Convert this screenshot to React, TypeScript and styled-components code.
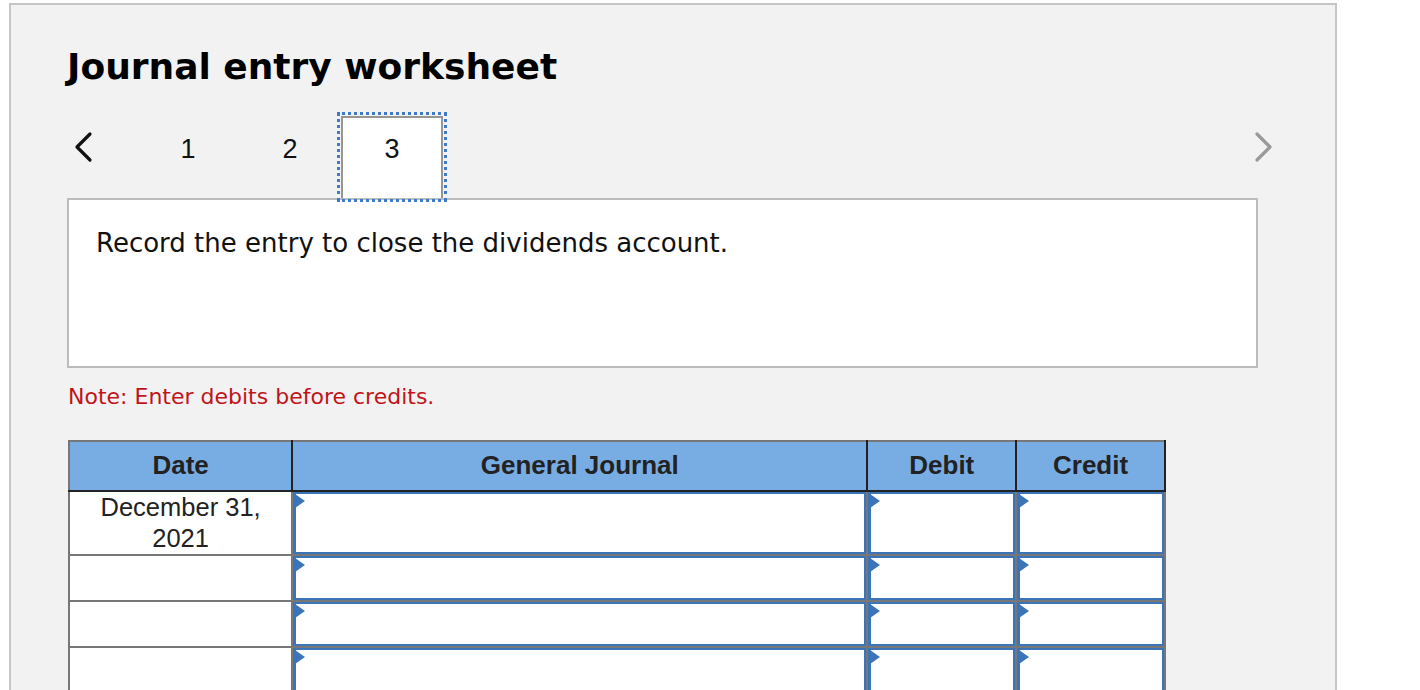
import React from 'react';
import styled, { createGlobalStyle } from 'styled-components';

const GlobalStyle = createGlobalStyle`
  html, body {
    margin: 0;
    padding: 0;
    background: #ffffff;
  }
  body {
    font-family: "Liberation Sans", Arial, sans-serif;
    color: #222;
  }
`;

const Page = styled.div`
  padding: 3px 0 0 9px;
  height: 687px;
  overflow: hidden;
`;

const Panel = styled.section`
  width: 1328px;
  min-height: 700px;
  background: #f2f2f2;
  border: 2px solid #c6c6c6;
  padding: 0 0 0 56px;
  box-sizing: border-box;
`;

const Title = styled.h1`
  margin: 0;
  padding-top: 42px;
  font-family: "DejaVu Sans", Verdana, sans-serif;
  font-weight: bold;
  font-size: 36px;
  line-height: 40px;
  color: #000;
`;

const TabBar = styled.div`
  display: flex;
  align-items: flex-start;
  margin-top: 29px;
  width: 1208px;
  height: 82px;
  position: relative;
  z-index: 1;
`;

const Arrow = styled.button<{ $muted?: boolean }>`
  width: 70px;
  height: 62px;
  padding: 0;
  border: none;
  background: transparent;
  display: flex;
  align-items: center;
  justify-content: ${p => (p.$muted ? 'flex-end' : 'flex-start')};
  padding-left: ${p => (p.$muted ? '0' : '5px')};
  color: ${p => (p.$muted ? '#9a9a9a' : '#111')};
  margin-left: ${p => (p.$muted ? 'auto' : '0')};
  box-sizing: border-box;
`;

const Tab = styled.div<{ $active?: boolean }>`
  width: 102px;
  height: 82px;
  box-sizing: border-box;
  display: flex;
  justify-content: center;
  padding-top: 15px;
  font-family: "Liberation Sans", Arial, sans-serif;
  font-size: 27px;
  line-height: 32px;
  color: #111;
  background: ${p => (p.$active ? '#fff' : 'transparent')};
  border: 2px solid ${p => (p.$active ? '#959595' : 'transparent')};
  border-bottom: none;
  outline: ${p => (p.$active ? '3px dotted #3f7ac7' : 'none')};
  outline-offset: 1px;
`;

const QuestionBox = styled.div`
  width: 1191px;
  height: 170px;
  box-sizing: border-box;
  background: #fff;
  border: 2px solid #bcbcbc;
  padding: 28px 0 0 27px;
  font-family: "DejaVu Sans", Verdana, sans-serif;
  font-size: 26px;
  line-height: 30px;
  color: #111;
`;

const Note = styled.p`
  margin: 16px 0 0 1px;
  font-family: "DejaVu Sans", Verdana, sans-serif;
  font-size: 22px;
  line-height: 26px;
  color: #c0141a;
`;

const Table = styled.table`
  margin-top: 30px;
  margin-left: 1px;
  border-collapse: collapse;
  table-layout: fixed;
  width: 1098px;
  font-family: "Liberation Sans", Arial, sans-serif;
`;

const HeadCell = styled.th`
  height: 46px;
  padding: 0 0 2px;
  background: #78ade4;
  font-size: 26px;
  font-weight: bold;
  color: #222;
  border-top: 2px solid #777;
  border-bottom: 2px solid #222;
  border-left: 2px solid #222;
  border-right: 2px solid #222;
  &:first-child {
    border-left: 2px solid #777;
  }
`;

const DateCell = styled.td<{ $h: number }>`
  height: ${p => p.$h}px;
  padding: 0;
  background: #fff;
  border: 2px solid #777;
  text-align: center;
  font-size: 25.5px;
  line-height: 31px;
  color: #222;
  vertical-align: top;
`;

const InputCell = styled.td`
  padding: 0;
  border: 2px solid #777;
  background: #fff;
`;

const InputBox = styled.div<{ $h: number }>`
  height: ${p => p.$h}px;
  box-sizing: border-box;
  border: 2px solid #3b74b9;
  border-left-width: 3px;
  background: #fff;
  position: relative;

  &::before {
    content: '';
    position: absolute;
    top: 0;
    left: -1px;
    border-top: 7px solid transparent;
    border-bottom: 7px solid transparent;
    border-left: 10px solid #3b74b9;
  }
`;

const Chevron = ({ dir }: { dir: 'left' | 'right' }) => (
  <svg width="24" height="32" viewBox="0 0 24 32" fill="none">
    <path
      d={dir === 'left' ? 'M18 3 L5 16 L18 29' : 'M6 3 L19 16 L6 29'}
      stroke="currentColor"
      strokeWidth="3.2"
      strokeLinecap="round"
      strokeLinejoin="round"
    />
  </svg>
);

const columns = [
  { label: 'Date', w: 222 },
  { label: 'General Journal', w: 572 },
  { label: 'Debit', w: 148 },
  { label: 'Credit', w: 148 },
];

const rows = [
  { date: ['December 31,', '2021'], h: 62 },
  { date: [], h: 44 },
  { date: [], h: 44 },
  { date: [], h: 44 },
];

const App: React.FC = () => {
  return (
    <>
      <GlobalStyle />
      <Page>
        <Panel>
          <Title>Journal entry worksheet</Title>

          <TabBar>
            <Arrow aria-label="previous">
              <Chevron dir="left" />
            </Arrow>
            <Tab>1</Tab>
            <Tab>2</Tab>
            <Tab $active>3</Tab>
            <Arrow $muted aria-label="next">
              <Chevron dir="right" />
            </Arrow>
          </TabBar>

          <QuestionBox>Record the entry to close the dividends account.</QuestionBox>

          <Note>Note: Enter debits before credits.</Note>

          <Table>
            <colgroup>
              {columns.map(c => (
                <col key={c.label} style={{ width: c.w }} />
              ))}
            </colgroup>
            <thead>
              <tr>
                {columns.map(c => (
                  <HeadCell key={c.label}>{c.label}</HeadCell>
                ))}
              </tr>
            </thead>
            <tbody>
              {rows.map((r, i) => (
                <tr key={i}>
                  <DateCell $h={r.h}>
                    {r.date.map((l, j) => (
                      <div key={j}>{l}</div>
                    ))}
                  </DateCell>
                  <InputCell>
                    <InputBox $h={r.h} />
                  </InputCell>
                  <InputCell>
                    <InputBox $h={r.h} />
                  </InputCell>
                  <InputCell>
                    <InputBox $h={r.h} />
                  </InputCell>
                </tr>
              ))}
            </tbody>
          </Table>
        </Panel>
      </Page>
    </>
  );
};

export default App;
